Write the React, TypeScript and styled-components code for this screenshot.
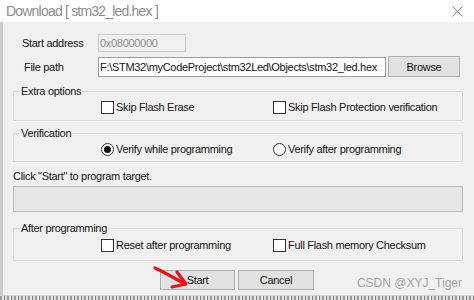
import React from "react";
import styled, { createGlobalStyle } from "styled-components";

const Global = createGlobalStyle`
  html, body { margin: 0; padding: 0; background: #f0f0f0; }
  #root { width: 474px; height: 300px; overflow: hidden; }
  * { box-sizing: border-box; }
`;

const Window = styled.div`
  position: relative;
  width: 474px;
  height: 300px;
  display: flex;
  flex-direction: column;
  background: #f0f0f0;
  overflow: hidden;
  font-family: "Liberation Sans", Arial, sans-serif;
  font-size: 11px;
  letter-spacing: -0.3px;
  color: #141414;
`;

const TitleBar = styled.div`
  height: 22px;
  flex: none;
  background: #ffffff;
  display: flex;
  align-items: center;
  justify-content: space-between;
  padding: 0 11px 0 6px;
`;

const Title = styled.span`
  font-size: 14px;
  letter-spacing: -0.8px;
  color: #8e8e8e;
`;

const Body = styled.div`
  flex: 1;
  border-left: 3px solid #cdcdcd;
  padding: 12px 11px 0 10px;
  display: flex;
  flex-direction: column;
`;

const FieldRow = styled.div<{ $mt: number; $h: number }>`
  display: flex;
  align-items: center;
  margin-top: ${(p) => p.$mt}px;
  height: ${(p) => p.$h}px;
`;

const FieldLabel = styled.span<{ $indent: number }>`
  flex: none;
  width: 85px;
  padding-left: ${(p) => p.$indent}px;
`;

const TextBox = styled.div<{ $w: number; $h: number; $disabled?: boolean }>`
  flex: none;
  width: ${(p) => p.$w}px;
  height: ${(p) => p.$h}px;
  border: 1px solid ${(p) => (p.$disabled ? "#cccccc" : "#9c9c9c")};
  background: ${(p) => (p.$disabled ? "#f0f0f0" : "#ffffff")};
  color: ${(p) => (p.$disabled ? "#8c8c8c" : "#141414")};
  padding-left: 1px;
  display: flex;
  align-items: center;
  white-space: nowrap;
  overflow: hidden;
`;

const Button = styled.div<{ $w: number; $h: number; $ml?: number }>`
  flex: none;
  width: ${(p) => p.$w}px;
  height: ${(p) => p.$h}px;
  margin-left: ${(p) => p.$ml ?? 0}px;
  background: #e1e1e1;
  border: 1px solid #adadad;
  display: flex;
  align-items: center;
  justify-content: center;
  color: #141414;
`;

const Group = styled.fieldset<{ $mt: number; $pt: number; $pb: number }>`
  margin: ${(p) => p.$mt}px 0 0 0;
  padding: ${(p) => p.$pt}px 0 ${(p) => p.$pb}px 0;
  border: 1px solid #d9d9d9;
  min-width: 0;
`;

const Legend = styled.legend`
  margin-left: 6px;
  padding: 0 1px;
  line-height: 12px;
  font-size: 11px;
`;

const OptionGrid = styled.div`
  display: grid;
  grid-template-columns: 172px auto;
  padding-left: 87px;
  height: 14px;
`;

const Option = styled.div`
  display: flex;
  align-items: center;
  gap: 2px;
  white-space: nowrap;
`;

const CheckBox = styled.span`
  width: 13px;
  height: 13px;
  flex: none;
  border: 1px solid #333333;
  background: #ffffff;
`;

const Radio = styled.span<{ $checked?: boolean }>`
  width: 13px;
  height: 13px;
  flex: none;
  border: 1px solid #333333;
  border-radius: 50%;
  background: #ffffff;
  display: flex;
  align-items: center;
  justify-content: center;
  &::after {
    content: "";
    width: 7px;
    height: 7px;
    border-radius: 50%;
    background: ${(p) => (p.$checked ? "#111111" : "transparent")};
  }
`;

const Hint = styled.div`
  margin-top: 8px;
  line-height: 13px;
`;

const ProgressBox = styled.div`
  margin-top: 3px;
  height: 26px;
  background: #e6e6e6;
  border: 1px solid #bcbcbc;
`;

const ButtonRow = styled.div`
  margin-top: 9px;
  display: flex;
  gap: 3px;
  padding-left: 147px;
`;

const BottomStrip = styled.div`
  flex: none;
  height: 5px;
  border-top: 1px solid #d4d4d4;
  background: repeating-linear-gradient(
    90deg,
    #9a9a9a 0px,
    #9a9a9a 2px,
    #e8e8e8 2px,
    #e8e8e8 4px,
    #7c7c7c 4px,
    #7c7c7c 5px,
    #dcdcdc 5px,
    #dcdcdc 7px
  );
`;

const Watermark = styled.div`
  position: absolute;
  right: 12px;
  bottom: 10px;
  font-size: 12px;
  letter-spacing: 0;
  color: rgba(140, 140, 140, 0.8);
`;

const Arrow = styled.svg`
  position: absolute;
  left: 150px;
  top: 262px;
`;

export default function App() {
  return (
    <>
      <Global />
      <Window>
        <TitleBar>
          <Title>Download [ stm32_led.hex ]</Title>
          <svg width="11" height="11" viewBox="0 0 11 11">
            <path d="M0.5 0.5 L10.5 10.5 M10.5 0.5 L0.5 10.5" stroke="#8a8a8a" strokeWidth="1" fill="none" />
          </svg>
        </TitleBar>
        <Body>
          <FieldRow $mt={0} $h={18}>
            <FieldLabel $indent={9}>Start address</FieldLabel>
            <TextBox $w={88} $h={18} $disabled>0x08000000</TextBox>
          </FieldRow>
          <FieldRow $mt={4} $h={21}>
            <FieldLabel $indent={11}>File path</FieldLabel>
            <TextBox $w={288} $h={20}>F:\STM32\myCodeProject\stm32Led\Objects\stm32_led.hex</TextBox>
            <Button $w={72} $h={21} $ml={2}>Browse</Button>
          </FieldRow>

          <Group $mt={8} $pt={3} $pb={6}>
            <Legend>Extra options</Legend>
            <OptionGrid>
              <Option><CheckBox />Skip Flash Erase</Option>
              <Option><CheckBox />Skip Flash Protection verification</Option>
            </OptionGrid>
          </Group>

          <Group $mt={6} $pt={3} $pb={5}>
            <Legend>Verification</Legend>
            <OptionGrid>
              <Option><Radio $checked />Verify while programming</Option>
              <Option><Radio />Verify after programming</Option>
            </OptionGrid>
          </Group>

          <Hint>Click "Start" to program target.</Hint>
          <ProgressBox />

          <Group $mt={10} $pt={4} $pb={8}>
            <Legend>After programming</Legend>
            <OptionGrid>
              <Option><CheckBox />Reset after programming</Option>
              <Option><CheckBox />Full Flash memory Checksum</Option>
            </OptionGrid>
          </Group>

          <ButtonRow>
            <Button $w={75} $h={20}>Start</Button>
            <Button $w={76} $h={20}>Cancel</Button>
          </ButtonRow>
        </Body>
        <BottomStrip />
        <Watermark>CSDN @XYJ_Tiger</Watermark>
        <Arrow width="44" height="32" viewBox="0 0 44 32">
          <path d="M5 6 C14 10 24 16 35 22" stroke="#e3161b" strokeWidth="3.2" strokeLinecap="round" fill="none" />
          <path d="M27 10 L36 22 L22 25" stroke="#e3161b" strokeWidth="3.2" strokeLinecap="round" strokeLinejoin="round" fill="none" />
        </Arrow>
      </Window>
    </>
  );
}
